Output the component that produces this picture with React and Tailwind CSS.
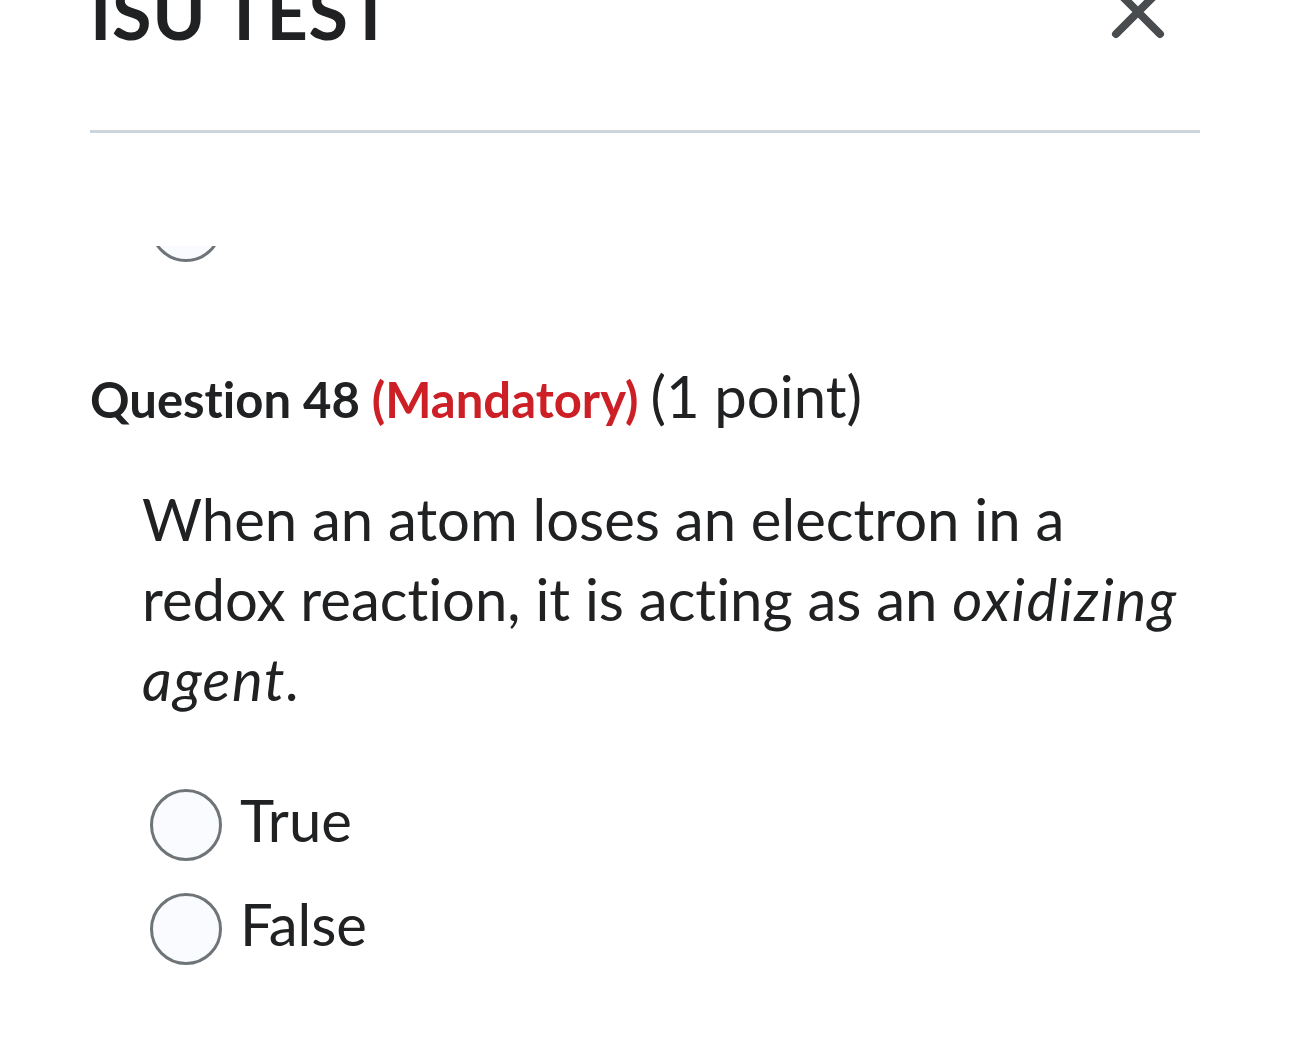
export default function App() {
  return (
    <div className="w-[1290px] h-[1052px] overflow-hidden bg-white text-[#202122] [font-variant-ligatures:none]" style={{ fontFamily: 'Lato, "Noto Sans", sans-serif' }}>
      <div className="mx-[90px] h-[133px] border-b-[3px] border-[#cdd5dc] flex justify-between items-start">
        <h1 className="text-[72px] font-bold leading-none -mt-[24px] tracking-[0.01em]">ISU TEST</h1>
        <svg className="-mt-[18px] mr-[32px]" width="60" height="60" viewBox="0 0 60 60" fill="none" stroke="#494c4f" strokeWidth="8" strokeLinecap="round">
          <path d="M8 8 L52 52 M52 8 L8 52" />
        </svg>
      </div>

      <div className="mt-[113px] h-[16px] overflow-hidden pl-[150px]">
        <div className="-mt-[56px] w-[72px] h-[72px] rounded-full border-[3px] border-[#6e7477] bg-[#f9fbff]" />
      </div>

      <div className="px-[90px] mt-[102px]">
        <h2 className="text-[49px] leading-[64px] font-bold">
          Question 48 <span className="text-[#cd2026]">(Mandatory)</span>{' '}
          <span className="text-[58px] font-normal">(1 point)</span>
        </h2>

        <p className="mt-[48px] pl-[52px] text-[58px] leading-[80px]">
          When an atom loses an electron in a redox reaction, it is acting as an{' '}
          <em className="tracking-[0.03em]">oxidizing agent.</em>
        </p>

        <div className="mt-[70px] pl-[60px] flex flex-col gap-[32px]">
          {['True', 'False'].map((label) => (
            <label key={label} className="flex items-center gap-[18px]">
              <span className="w-[72px] h-[72px] rounded-full border-[3px] border-[#6e7477] bg-[#f9fbff] shrink-0" />
              <span className="text-[58px] leading-none mb-[10px]">{label}</span>
            </label>
          ))}
        </div>
      </div>
    </div>
  );
}
